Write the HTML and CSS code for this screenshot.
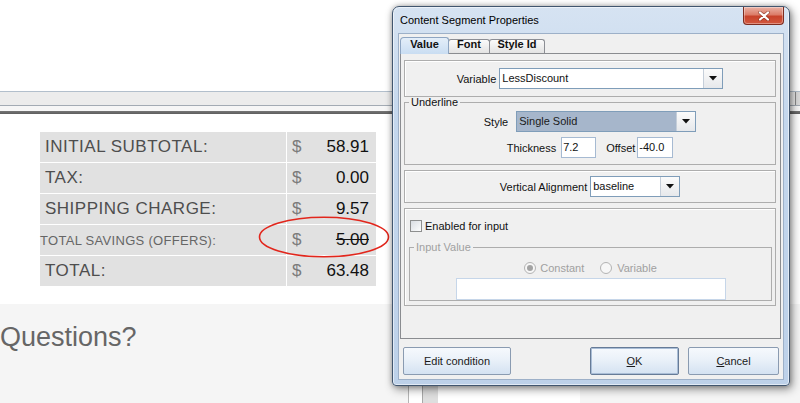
FILE: index.html
```html
<!DOCTYPE html>
<html>
<head>
<meta charset="utf-8">
<title>Content Segment Properties</title>
<link rel="stylesheet" href="styles.css">
</head>
<body>
<div class="page">
  <div class="top"></div>
  <div class="bar"><span class="bar-end"></span></div>
  <div class="bar-shadow"></div>
  <div class="summary">
    <div class="grid">
      <div class="lbl">INITIAL SUBTOTAL:</div>
      <div class="val"><span class="cur">$</span><span class="num">58.91</span></div>
      <div class="lbl">TAX:</div>
      <div class="val"><span class="cur">$</span><span class="num">0.00</span></div>
      <div class="lbl">SHIPPING CHARGE:</div>
      <div class="val"><span class="cur">$</span><span class="num">9.57</span></div>
      <div class="lbl small">TOTAL SAVINGS (OFFERS):</div>
      <div class="val"><span class="cur">$</span><span class="num strike">5.00</span></div>
      <div class="lbl">TOTAL:</div>
      <div class="val"><span class="cur">$</span><span class="num">63.48</span></div>
    </div>
    <svg class="circle" viewBox="0 0 132 42" width="132" height="42">
      <ellipse cx="66" cy="21" rx="64.5" ry="19.8" fill="none" stroke="#e2261c" stroke-width="1.6"/>
    </svg>
  </div>
  <section class="questions">
    <div class="q-col"><h2>Questions?</h2></div>
    <div class="behind"><div class="b1"></div><div class="b2"></div><div class="b3"></div></div>
  </section>
</div>

<div class="dialog">
  <div class="titlebar">
    <span class="title">Content Segment Properties</span>
    <div class="close">
      <svg viewBox="0 0 14 10" width="14" height="10">
        <path d="M3 1.5 L11 8.5 M11 1.5 L3 8.5" stroke="#6a2418" stroke-width="3.6" stroke-linecap="round" opacity="0.55"/>
        <path d="M3 1.5 L11 8.5 M11 1.5 L3 8.5" stroke="#ffffff" stroke-width="2.2" stroke-linecap="round"/>
      </svg>
    </div>
  </div>
  <div class="client">
    <div class="tabs">
      <div class="tab sel w-value">Value</div>
      <div class="tab w-font">Font</div>
      <div class="tab w-style">Style Id</div>
    </div>
    <div class="panel">
      <div class="box s1">
        <div class="row">
          <span class="label">Variable</span>
          <div class="combo w-var">
            <span class="cv">LessDiscount</span>
            <span class="arrow"><svg viewBox="0 0 8 5" width="8" height="5"><path d="M0 0 H8 L4 4.5 Z" fill="#111"/></svg></span>
          </div>
        </div>
      </div>
      <fieldset class="group s2">
        <legend>Underline</legend>
        <div class="row">
          <span class="label gap-style">Style</span>
          <div class="combo chosen w-style-c">
            <span class="cv">Single Solid</span>
            <span class="arrow"><svg viewBox="0 0 8 5" width="8" height="5"><path d="M0 0 H8 L4 4.5 Z" fill="#111"/></svg></span>
          </div>
        </div>
        <div class="row row2">
          <span class="label gap-thick">Thickness</span>
          <div class="field w-thick">7.2</div>
          <span class="label gap-offset">Offset</span>
          <div class="field w-offset">-40.0</div>
        </div>
      </fieldset>
      <div class="box s3">
        <div class="row">
          <span class="label">Vertical Alignment</span>
          <div class="combo w-va">
            <span class="cv">baseline</span>
            <span class="arrow"><svg viewBox="0 0 8 5" width="8" height="5"><path d="M0 0 H8 L4 4.5 Z" fill="#111"/></svg></span>
          </div>
        </div>
      </div>
      <div class="box s4">
        <div class="check"><span class="cb"></span><span>Enabled for input</span></div>
        <fieldset class="group inner">
          <legend class="disabled">Input Value</legend>
          <div class="row radios">
            <span class="radio on"></span><span class="disabled rlabel">Constant</span>
            <span class="radio second"></span><span class="disabled rlabel">Variable</span>
          </div>
          <div class="row input-row">
            <div class="field off w-input"></div>
          </div>
        </fieldset>
      </div>
    </div>
    <div class="buttons">
      <div class="btn w-edit">Edit condition</div>
      <div class="btn default w-ok"><u>O</u>K</div>
      <div class="btn w-cancel"><u>C</u>ancel</div>
    </div>
  </div>
</div>
</body>
</html>
```

FILE: styles.css
```css
* { box-sizing: border-box; }
html, body { margin: 0; padding: 0; }
body {
  width: 800px;
  height: 403px;
  overflow: hidden;
  background: #fff;
  position: relative;
  font-family: "Liberation Sans", Arial, sans-serif;
}

/* ---------- page behind ---------- */
.top { height: 91px; }
.bar {
  height: 15px;
  border-top: 1px solid #b2bfcc;
  border-bottom: 1px solid #a3abb4;
  background: #ececec;
  display: flex;
  justify-content: flex-end;
}
.bar-end { width: 5px; border-left: 1px solid #8a8a8a; background: #dadada; }
.bar-shadow {
  height: 8px;
  background: linear-gradient(#f6f6f6 0, #f6f6f6 5px, #767676 5px, #5e5e5e 8px);
}
.summary { position: relative; margin-top: 18px; padding-left: 40px; }
.grid {
  display: grid;
  grid-template-columns: 246px 89px;
  grid-auto-rows: 30px;
  gap: 1px;
  width: 336px;
  background: #fff;
}
.lbl {
  background: #e1e1e1;
  display: flex;
  align-items: center;
  padding-left: 5px;
  font-size: 17px;
  letter-spacing: 0.5px;
  color: #4e4e4e;
  white-space: nowrap;
}
.lbl.small { font-size: 13px; padding-left: 0; letter-spacing: 0.3px; color: #666; }
.val {
  background: #e1e1e1;
  display: flex;
  align-items: center;
  padding: 0 7px 0 5px;
  font-size: 17px;
}
.cur { color: #7a7a7a; }
.num { margin-left: auto; color: #111; }
.strike { text-decoration: line-through; }
.circle { position: absolute; left: 258px; top: 84px; overflow: visible; }

.questions {
  margin-top: 18px;
  height: 99px;
  background: #f5f5f5;
  display: flex;
}
.q-col { width: 408px; flex: none; }
.q-col h2 {
  margin: 0;
  padding-top: 18px;
  font-weight: normal;
  font-size: 27px;
  line-height: 30px;
  color: #666;
}
.behind { display: flex; margin-top: 40px; }
.b1 { width: 14px; border-left: 1px solid #b5b5b5; background: #fff; }
.b2 { width: 16px; border-left: 1px solid #a8a8a8; background: #dedede; }
.b3 { width: 142px; background: #fff; }

/* ---------- dialog window ---------- */
.dialog {
  position: absolute;
  left: 392px;
  top: 6px;
  width: 398px;
  height: 380px;
  border: 1px solid #41566f;
  border-radius: 7px 7px 4px 4px;
  background: linear-gradient(#d6e3f2, #c4d7ed 30%, #bdd1e9);
  box-shadow: inset 0 0 0 1px rgba(255,255,255,0.55), 2px 3px 10px rgba(0,0,0,0.45), 0 0 5px rgba(0,0,0,0.25);
  padding: 0 5px 5px;
  display: flex;
  flex-direction: column;
  font-size: 11px;
  color: #111;
}
.titlebar { height: 26px; flex: none; display: flex; align-items: flex-start; }
.title { align-self: center; padding-left: 2px; color: #000; font-size: 11px; }
.close {
  margin-left: auto;
  width: 41px;
  height: 18px;
  border: 1px solid #7d2c1f;
  border-top: none;
  border-radius: 0 0 4px 4px;
  background: linear-gradient(#eab2a5 0%, #dc7d69 45%, #c8432b 55%, #d2583f 100%);
  box-shadow: inset 0 0 0 1px rgba(255,255,255,0.35);
  display: flex;
  align-items: center;
  justify-content: center;
}
.client {
  flex: 1;
  background: #f0f0f0;
  border: 1px solid #9db0c8;
  padding: 3px 2px 0 1px;
  display: flex;
  flex-direction: column;
}

/* tabs */
.tabs { height: 16px; flex: none; display: flex; align-items: flex-end; position: relative; z-index: 1; }
.tab {
  height: 14px;
  border: 1px solid #8c8e94;
  border-bottom: none;
  border-radius: 3px 3px 0 0;
  background: linear-gradient(#fbfbfb, #e3e3e3);
  font-weight: bold;
  line-height: 9px;
  text-align: center;
  margin-left: -1px;
  color: #111;
}
.tab.sel {
  height: 17px;
  margin-bottom: -1px;
  margin-left: 0;
  line-height: 12px;
  border-color: #8ea5c2;
  background: linear-gradient(#e4eef9, #c9ddf2);
  border-radius: 4px 3px 0 0;
  position: relative;
  z-index: 2;
}
.w-value { width: 49px; }
.w-font { width: 42px; }
.w-style { width: 56px; }

.panel {
  flex: 1;
  border: 1px solid #8a8c90;
  background: #f0f0f0;
  padding: 6px 4px 0 3px;
  display: flex;
  flex-direction: column;
}
.box {
  border: 1px solid #adadad;
  box-shadow: inset 1px 1px 0 #fff;
}
.row { display: flex; align-items: center; justify-content: center; }
.label { white-space: nowrap; color: #111; }
.s1 { padding: 7px 0; }
.s1 .label { margin-right: 3px; }

.group {
  margin: 0;
  padding: 0;
  min-width: 0;
  border: 1px solid #adadad;
}
.group legend {
  padding: 0 2px;
  margin-left: 4px;
  font-size: 11px;
  line-height: 11px;
  color: #111;
}
.s2 { padding: 3px 0 6px; }
.row2 { margin-top: 5px; }
.gap-style { margin-right: 8px; }
.gap-thick { margin-right: 5px; }
.gap-offset { margin-left: 10px; margin-right: 2px; }

.s3 { margin-top: 5px; padding: 5px 0; }
.s3 .label { margin-right: 3px; }

.s4 { margin-top: 5px; padding: 8px 3px 4px 4px; }
.check { height: 17px; display: flex; align-items: center; margin-left: 1px; color: #111; }
.cb {
  width: 12px;
  height: 12px;
  border: 1px solid #8e8f8f;
  background: linear-gradient(135deg, #d9dde2, #fdfdfd);
  margin-right: 3px;
}
.inner { margin-top: 8px; padding: 7px 0 0; }
.inner legend.disabled { color: #a0a0a0; }
.disabled { color: #a0a0a0; }
.radios { height: 15px; }
.radio {
  width: 12px;
  height: 12px;
  border-radius: 50%;
  border: 1px solid #b3b3b3;
  background: #f7f7f7;
  display: flex;
  align-items: center;
  justify-content: center;
  margin-right: 4px;
}
.radio.on::after {
  content: "";
  width: 6px;
  height: 6px;
  border-radius: 50%;
  background: #a3a3a3;
}
.radio.second { margin-left: 16px; margin-right: 5px; }
.input-row { margin-top: 3px; }

/* combo & fields */
.combo {
  height: 21px;
  border: 1px solid #7f9db9;
  background: #fff;
  display: flex;
}
.cv { flex: 1; padding-left: 2px; line-height: 19px; color: #111; white-space: nowrap; }
.combo.chosen .cv { background: #a6b6cb; color: #1a1a1a; }
.arrow {
  width: 19px;
  border-left: 1px solid #c5ced9;
  background: linear-gradient(#fbfbfb, #e6e8eb);
  display: flex;
  align-items: center;
  justify-content: center;
}
.w-var { width: 224px; }
.w-style-c { width: 180px; }
.w-va { width: 90px; }
.field {
  height: 21px;
  border: 1px solid #a6bad2;
  background: #fff;
  padding-left: 1px;
  line-height: 19px;
  color: #111;
}
.field.off { height: 22px; border-color: #c6d6e9; }
.w-thick { width: 35px; }
.w-offset { width: 36px; }
.w-input { width: 270px; }

/* buttons */
.buttons {
  height: 28px;
  flex: none;
  margin: 8px 2px 4px 3px;
  display: flex;
}
.btn {
  height: 28px;
  border: 1px solid #8a9bb1;
  border-radius: 2px;
  background: linear-gradient(#f6f9fd, #eaf1f9 45%, #d4e2f2);
  display: flex;
  align-items: center;
  justify-content: center;
  color: #1a1a1a;
  font-size: 11px;
}
.btn.default { border-color: #667b97; box-shadow: inset 0 0 0 1px #a9bdd6; }
.w-edit { width: 108px; }
.w-ok { width: 89px; margin-left: auto; }
.w-cancel { width: 91px; margin-left: 9px; }
```
